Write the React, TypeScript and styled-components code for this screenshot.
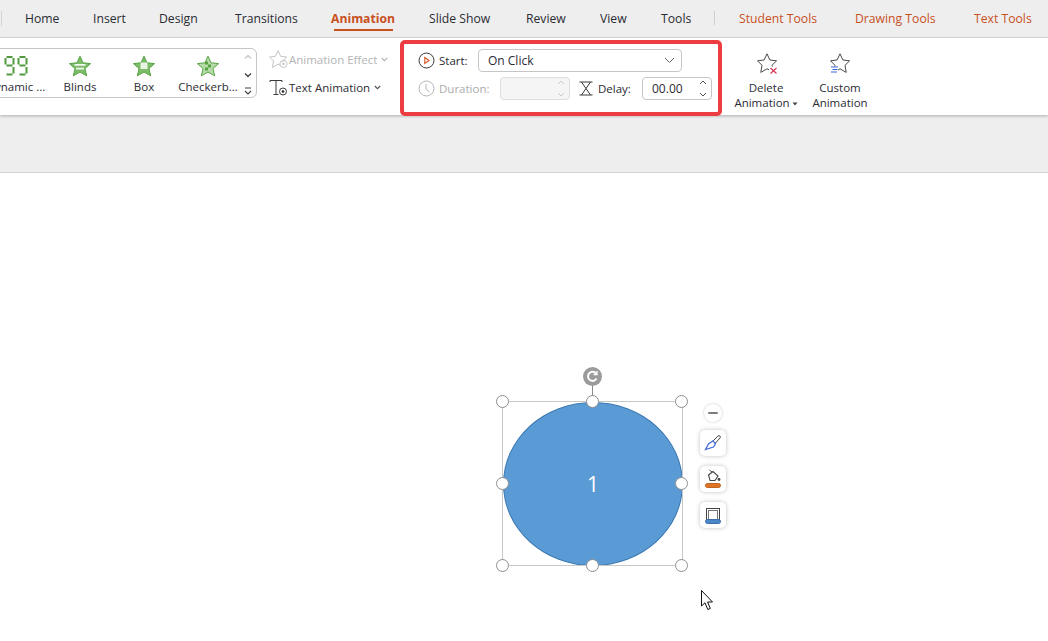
import React from "react";
import styled, { createGlobalStyle } from "styled-components";

const Global = createGlobalStyle`
  html, body { margin: 0; padding: 0; background: #fff; }
  body { font-family: "Open Sans", "Noto Sans", "Liberation Sans", sans-serif; overflow: hidden; }
  * { box-sizing: border-box; }
`;

const Page = styled.div`
  width: 1048px; height: 641px; display: flex; flex-direction: column; overflow: hidden; background: #fff;
`;
const TabBar = styled.div`
  height: 38px; flex: none; background: #eeeeee; border-bottom: 1px solid #dcdcdc;
  display: flex; align-items: flex-start; padding-left: 1px;
`;
const EdgeRule = styled.span`
  width: 1px; height: 15px; background: #d4d4d4; margin: 11px 23px 0 0; flex: none;
`;
const Tab = styled.div<{ $w: number; $active?: boolean; $orange?: boolean }>`
  width: ${p => p.$w}px; flex: none; height: 37px; padding-top: 10px;
  font-size: 12.2px; line-height: 18px; white-space: nowrap; position: relative;
  font-weight: ${p => (p.$active ? 700 : 400)};
  color: ${p => (p.$active || p.$orange ? "#c8501e" : "#2b2b33")};
  ${p => p.$active && `&::after { content: ""; position: absolute; left: 3px; width: 59px; bottom: 6px; height: 2px; background: #c5521c; }`}
`;
const TabRule = styled.span`
  width: 1px; height: 14px; background: #cfcfcf; margin: 11px 24px 0 0; flex: none;
`;
const Ribbon = styled.div`
  height: 77px; flex: none; background: #fff; display: flex; align-items: flex-start;
  box-shadow: 0 1px 3px rgba(0,0,0,.28); position: relative; z-index: 2;
`;
const Gallery = styled.div`
  margin: 10px 0 0 -17px; width: 274px; height: 50px; flex: none; border: 1px solid #c6c6c6; border-radius: 6px;
  display: flex; overflow: hidden;
`;
const GalleryItem = styled.div`
  width: 64px; flex: none; display: flex; flex-direction: column; align-items: center;
  font-size: 11.5px; color: #2b2b33; line-height: 16px; white-space: nowrap; padding-top: 6px;
  & > svg { height: 22px; flex: none; }
  & > span { margin-top: 2px; }
`;
const GalleryScroll = styled.div`
  width: 16px; flex: none; display: flex; flex-direction: column; align-items: center; padding-top: 5px; gap: 3px;
  & > svg { display: block; }
`;
const EffectColumn = styled.div`
  margin: 11px 0 0 12px; width: 131px; flex: none; display: flex; flex-direction: column; gap: 8px;
`;
const EffectRow = styled.div<{ $off?: boolean }>`
  display: flex; align-items: center; height: 20px; font-size: 11.5px; white-space: nowrap;
  color: ${p => (p.$off ? "#b4b4b4" : "#2b2b33")};
  & > svg:first-child { margin-right: 1px; flex: none; }
  & > svg:last-child { margin-left: 4px; }
`;
const TimingBox = styled.div`
  width: 322px; height: 76px; margin: 2px 0 0 0; border: 4px solid #ee3d42; border-radius: 5px; background: #fff; flex: none;
  padding: 5px 0 0 14px; display: flex; flex-direction: column; gap: 5px; position: relative; z-index: 3;
`;
const TimingRow = styled.div`
  display: flex; align-items: center; height: 23px; font-size: 11.5px; color: #2b2b33; white-space: nowrap;
  & > svg { flex: none; }
`;
const Label = styled.span<{ $w: number; $off?: boolean }>`
  width: ${p => p.$w}px; flex: none; margin-left: 4px; color: ${p => (p.$off ? "#ababab" : "#2b2b33")};
`;
const DelayLabel = styled.span`
  width: 44px; flex: none; margin-left: 5px; color: #2b2b33;
`;
const Select = styled.div`
  width: 204px; height: 23px; border: 1px solid #c6c6c6; border-radius: 4px; display: flex; align-items: center;
  justify-content: space-between; padding: 0 6px 0 9px; font-size: 12px; color: #2b2b33;
`;
const Spin = styled.div<{ $off?: boolean }>`
  width: 70px; height: 23px; flex: none;
  border: 1px solid ${p => (p.$off ? "#dedede" : "#c6c6c6")}; border-radius: 4px;
  background: ${p => (p.$off ? "#f5f5f5" : "#fff")};
  display: flex; align-items: center; justify-content: space-between; padding: 0 4px 0 9px; font-size: 12px; color: #2b2b33;
`;
const SpinArrows = styled.span`
  display: flex; flex-direction: column; gap: 7px; & > svg { display: block; }
`;
const BigButton = styled.div<{ $w: number; $ml: number; $nudge: number }>`
  width: ${p => p.$w}px; margin-left: ${p => p.$ml}px; flex: none; display: flex; flex-direction: column; align-items: center;
  font-size: 11.5px; line-height: 15px; color: #2b2b33; padding-top: 15px; text-align: center; white-space: nowrap;
  & > svg { margin: 0 0 6px ${p => p.$nudge}px; }
`;
const Band = styled.div`
  height: 58px; flex: none; background: #eeeeee; border-bottom: 1px solid #d6d6d6;
`;
const Canvas = styled.div`
  flex: 1; position: relative; background: #fff;
`;
/* Everything below sits on the free slide canvas, whose top is at y=173 */
const Frame = styled.div`
  position: absolute; left: 502px; top: 228px; width: 181px; height: 165px; border: 1px solid #c8c8c8;
`;
const Oval = styled.div`
  position: absolute; left: 503px; top: 229px; width: 180px; height: 164px; border-radius: 50%;
  background: #5b9bd5; border: 1px solid #3a78b2; color: #fff; display: flex; align-items: center; justify-content: center;
  font-size: 21px; font-weight: 500;
`;
const Handle = styled.div<{ $x: number; $y: number }>`
  position: absolute; left: ${p => p.$x - 6.5}px; top: ${p => p.$y - 173 - 6.5}px; width: 13px; height: 13px; border-radius: 50%;
  background: #fff; border: 1px solid #8e8e8e;
`;
const Stem = styled.div`
  position: absolute; left: 592px; top: 211px; width: 1px; height: 18px; background: #8a8a8a;
`;
const Rotate = styled.div`
  position: absolute; left: 583px; top: 194px; width: 19px; height: 19px; border-radius: 50%; background: #9b9b9b;
  display: flex; align-items: center; justify-content: center;
`;
const Minus = styled.div`
  position: absolute; left: 704px; top: 231px; width: 18px; height: 18px; border-radius: 50%; background: #fff;
  box-shadow: 0 0 3px rgba(0,0,0,.22); display: flex; align-items: center; justify-content: center;
  &::before { content: ""; width: 10px; height: 2px; background: #7c7c7c; border-radius: 1px; }
`;
const SideButton = styled.div<{ $y: number }>`
  position: absolute; left: 700px; top: ${p => p.$y - 173}px; width: 26px; height: 26px; border-radius: 5px; background: #fff;
  box-shadow: 0 0 4px rgba(0,0,0,.25); display: flex; align-items: center; justify-content: center;
`;
const Pointer = styled.svg`
  position: absolute; left: 700px; top: 416px;
`;

const STAR = "M12 1.200 15 7.800 22.600 8.600 17 13.500 18.600 20.800 12 17 5.400 20.800 7 13.500 1.400 8.600 9 7.800Z";
const Star = ({ inner, light }: { inner: React.ReactNode; light?: boolean }) => (
  <svg width="24" height="22" viewBox="0 0 24 22">
    <path d={STAR} fill={light ? "#b5dca8" : "#7dbd69"} stroke="#58a244" strokeWidth="1" strokeLinejoin="round" />
    {inner}
  </svg>
);
const Caret = ({ c = "#555" }: { c?: string }) => (
  <svg width="7" height="5" viewBox="0 0 7 5"><path d="M.8 1 3.500 3.600 6.200 1" fill="none" stroke={c} strokeWidth="1.200" /></svg>
);
const TinyCaret = () => (
  <svg width="6" height="4" viewBox="0 0 6 4" style={{ marginLeft: 2, marginBottom: 1 }}><path d="M.5.5h5L3 3.500Z" fill="#444" /></svg>
);
/* star outline with a gap at the lower right, where a badge sits */
const GapRight = ({ c = "#4a4a4a" }: { c?: string }) => (
  <path d="M12 16.800 10 15.800 3.800 19.400 5 12.300.5 7.800 7.100 7 10 .8 12.900 7 19.600 7.800 15 12.300 15.400 13.500" fill="none" stroke={c} strokeWidth="1" strokeLinejoin="round" />
);
/* star outline with a gap at the lower left, where the motion lines sit */
const GapLeft = () => (
  <path d="M8 17 10 15.800 16.200 19.400 15 12.300 19.600 7.800 12.900 7 10 .8 7.100 7 .5 7.800 5 12.300 4.700 13.500" fill="none" stroke="#4a4a4a" strokeWidth="1" strokeLinejoin="round" />
);
const Segments = () => (
  <svg width="24" height="20" viewBox="0 0 24 20" fill="none" stroke="#4f9a3c" strokeWidth="2">
    <path d="M2.500 1h6M1.500 2v6.500M9.500 2v6.500M2.500 9.500h6M9.500 11v6.500M2.500 18.500h6" />
    <path d="M15.500 1h6M14.500 2v6.500M22.500 2v6.500M15.500 9.500h6M22.500 11v6.500M15.500 18.500h6" />
  </svg>
);

const tabs: [string, number][] = [
  ["Home", 68], ["Insert", 66], ["Design", 76], ["Transitions", 96],
];

export default function App() {
  return (
    <Page>
      <Global />
      <TabBar>
        <EdgeRule />
        {tabs.map(([t, w]) => <Tab key={t} $w={w}>{t}</Tab>)}
        <Tab $w={98} $active>Animation</Tab>
        <Tab $w={97}>Slide Show</Tab>
        <Tab $w={74}>Review</Tab>
        <Tab $w={61}>View</Tab>
        <Tab $w={53}>Tools</Tab>
        <TabRule />
        <Tab $w={116} $orange>Student Tools</Tab>
        <Tab $w={119} $orange>Drawing Tools</Tab>
        <Tab $w={70} $orange>Text Tools</Tab>
      </TabBar>
      <Ribbon>
        <Gallery>
          <GalleryItem>
            <Segments />
            <span>Dynamic ...</span>
          </GalleryItem>
          <GalleryItem>
            <Star inner={<path d="M6.500 9.800h11M8 13.600h8" stroke="#f1f8ee" strokeWidth="1.800" />} />
            <span>Blinds</span>
          </GalleryItem>
          <GalleryItem>
            <Star inner={<rect x="8.500" y="7.500" width="7" height="6.500" fill="#e6f4e1" />} />
            <span>Box</span>
          </GalleryItem>
          <GalleryItem>
            <Star light inner={<path d="M9 6.500h3v3H9zM12 9.500h3v3h-3zM9 12.500h3v3H9z" fill="#58a244" />} />
            <span>Checkerb...</span>
          </GalleryItem>
          <GalleryScroll>
            <svg width="8" height="6" viewBox="0 0 8 6"><path d="M1 4.500 4 1.500 7 4.500" fill="none" stroke="#c4c4c4" strokeWidth="1.200" /></svg>
            <svg width="8" height="6" viewBox="0 0 8 6" style={{ marginTop: 9 }}><path d="M1 1.500 4 4.500 7 1.500" fill="none" stroke="#444" strokeWidth="1.400" /></svg>
            <svg width="8" height="8" viewBox="0 0 8 8" style={{ marginTop: 6 }}><path d="M1 1h6M1 4 4 7 7 4" fill="none" stroke="#444" strokeWidth="1.200" /></svg>
          </GalleryScroll>
        </Gallery>
        <EffectColumn>
          <EffectRow $off>
            <svg width="19" height="18" viewBox="0 0 21 20"><GapRight c="#bdbdbd" /><circle cx="16" cy="15.500" r="4" fill="none" stroke="#bdbdbd" /><circle cx="16" cy="15.500" r="1.200" fill="#bdbdbd" /></svg>
            Animation Effect
            <Caret c="#b4b4b4" />
          </EffectRow>
          <EffectRow>
            <svg width="19" height="18" viewBox="0 0 19 18" fill="none" stroke="#3a3a3a"><path d="M1 2.500h12M1 2.500v1.500M13 2.500v1.500M7 2.500V16.500M4.500 16.500h5" /><circle cx="14" cy="13.500" r="3.500" fill="#fff" /><circle cx="14" cy="13.500" r="1" fill="#3a3a3a" /></svg>
            Text Animation
            <Caret />
          </EffectRow>
        </EffectColumn>
        <TimingBox>
          <TimingRow>
            <svg width="17" height="17" viewBox="0 0 17 17"><circle cx="8.500" cy="8.500" r="7.500" fill="none" stroke="#3a3a3a" /><path d="M6.800 5.500 11 8.500 6.800 11.500Z" fill="none" stroke="#d2541f" strokeWidth="1.100" /></svg>
            <Label $w={39}>Start:</Label>
            <Select>On Click<svg width="11" height="7" viewBox="0 0 11 7"><path d="M1 1 5.500 5.500 10 1" fill="none" stroke="#666" /></svg></Select>
          </TimingRow>
          <TimingRow>
            <svg width="17" height="17" viewBox="0 0 17 17" fill="none" stroke="#b4b4b4"><circle cx="8.500" cy="8.500" r="7.500" /><path d="M8 4v5l3.500 3" /></svg>
            <Label $w={61} $off>Duration:</Label>
            <Spin $off>
              <span />
              <SpinArrows>
                <svg width="8" height="5" viewBox="0 0 8 5"><path d="M1 4 4 1 7 4" fill="none" stroke="#c8c8c8" /></svg>
                <svg width="8" height="5" viewBox="0 0 8 5"><path d="M1 1 4 4 7 1" fill="none" stroke="#c8c8c8" /></svg>
              </SpinArrows>
            </Spin>
            <svg width="14" height="15" viewBox="0 0 14 15" fill="none" stroke="#3a3a3a" style={{ marginLeft: 9 }}><path d="M.5 1h13M.5 14h13M2.500 1 7 7.500 11.500 1M2.500 14 7 7.500 11.500 14" /></svg>
            <DelayLabel>Delay:</DelayLabel>
            <Spin>
              00.00
              <SpinArrows>
                <svg width="8" height="5" viewBox="0 0 8 5"><path d="M1 4 4 1 7 4" fill="none" stroke="#555" /></svg>
                <svg width="8" height="5" viewBox="0 0 8 5"><path d="M1 1 4 4 7 1" fill="none" stroke="#555" /></svg>
              </SpinArrows>
            </Spin>
          </TimingRow>
        </TimingBox>
        <BigButton $w={72} $ml={8} $nudge={4}>
          <svg width="22" height="21" viewBox="0 0 22 21"><GapRight /><path d="M13.500 15 19.500 20.500M19.500 15 13.500 20.500" stroke="#d8324f" strokeWidth="1.100" /></svg>
          Delete
          <span>Animation<TinyCaret /></span>
        </BigButton>
        <BigButton $w={60} $ml={8} $nudge={2}>
          <svg width="22" height="21" viewBox="0 0 22 21"><GapLeft /><path d="M1 14h7M2.500 16.500h5M1 19h6" stroke="#3a62d8" strokeWidth="1" /></svg>
          Custom
          <span>Animation</span>
        </BigButton>
      </Ribbon>
      <Band />
      <Canvas>
        <Stem />
        <Rotate>
          <svg width="13" height="13" viewBox="0 0 13 13" fill="none" stroke="#fff" strokeWidth="2"><path d="M10.500 8.500a4.500 4.500 0 1 1-.5-5" /><path d="M11 1v3.500H7.500" strokeWidth="1.400" /></svg>
        </Rotate>
        <Oval>1</Oval>
        <Frame />
        {[[502, 401], [592, 401], [681, 401], [502, 483], [681, 483], [502, 565], [592, 565], [681, 565]].map(([x, y]) => (
          <Handle key={`${x}-${y}`} $x={x} $y={y} />
        ))}
        <Minus />
        <SideButton $y={430}>
          <svg width="18" height="18" viewBox="0 0 18 18" fill="none"><path d="M9 7 14.200 1.800a1.500 1.500 0 0 1 2 2L11 9.500" stroke="#444" /><path d="M9 6.800 11.500 9.800 9.500 13 1.500 15.500 4.500 10Z" stroke="#3f66dd" strokeWidth="1.200" /></svg>
        </SideButton>
        <SideButton $y={466}>
          <svg width="18" height="20" viewBox="0 0 18 20" fill="none"><path d="M4.500 6 9 2.500 14 7 11 11.500H6Z" stroke="#444" strokeWidth="1.100" /><path d="M8 3 5.500 1" stroke="#444" /><circle cx="15" cy="10.500" r="1.400" fill="#444" /><rect x="1.500" y="14.500" width="15" height="4" rx="2" fill="#e07426" stroke="#c0651f" /></svg>
        </SideButton>
        <SideButton $y={502}>
          <svg width="18" height="20" viewBox="0 0 18 20" fill="none"><rect x="2.500" y="3.500" width="13" height="11" stroke="#444" /><rect x="4.500" y="5.500" width="9" height="9" stroke="#777" /><rect x="1.500" y="14.500" width="15" height="4" rx="2" fill="#4a86c8" stroke="#3a6fa8" /></svg>
        </SideButton>
        <Pointer width="15" height="23" viewBox="0 0 15 23">
          <path d="M1.500 1.500V17L5 13.800 7.800 20.500 10.300 19.500 7.600 13H12.500Z" fill="#fff" stroke="#111" strokeWidth="1" strokeLinejoin="round" />
        </Pointer>
      </Canvas>
    </Page>
  );
}
